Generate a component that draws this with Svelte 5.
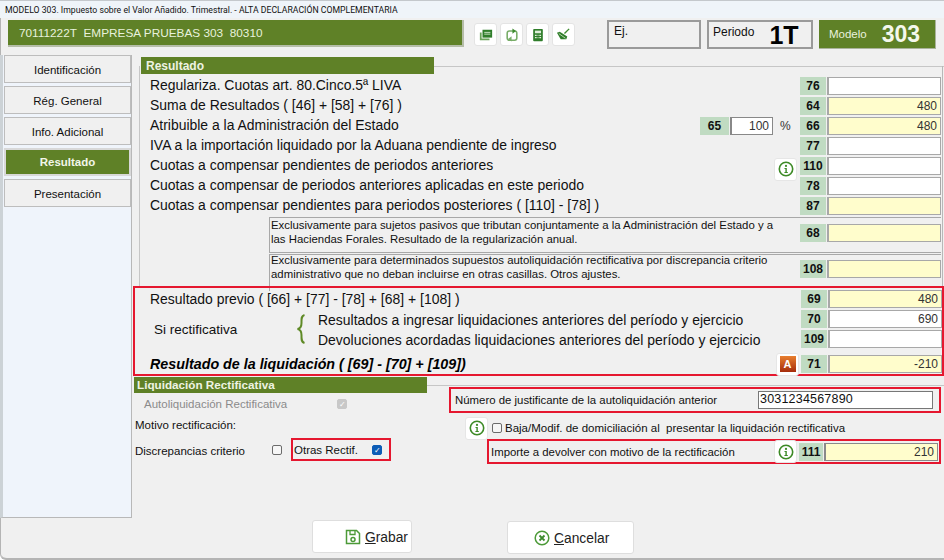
<script>
  const topRows = [
    { label: 'Regulariza. Cuotas art. 80.Cinco.5ª LIVA', code: '76', tone: 'white', value: '' },
    { label: 'Suma de Resultados ( [46] + [58] + [76] )', code: '64', tone: 'yellow', value: '480' },
    { label: 'Atribuible a la Administración del Estado', code: '66', tone: 'yellow', value: '480', pct: true },
    { label: 'IVA a la importación liquidado por la Aduana pendiente de ingreso', code: '77', tone: 'white', value: '' },
    { label: 'Cuotas a compensar pendientes de periodos anteriores', code: '110', tone: 'white', value: '', info: true },
    { label: 'Cuotas a compensar de periodos anteriores aplicadas en este periodo', code: '78', tone: 'white', value: '' },
    { label: 'Cuotas a compensar pendientes para periodos posteriores ( [110] - [78] )', code: '87', tone: 'yellow', value: '' }
  ];
  const notes = [
    { text: 'Exclusivamente para sujetos pasivos que tributan conjuntamente a la Administración del Estado y a las Haciendas Forales. Resultado de la regularización anual.', code: '68' },
    { text: 'Exclusivamente para determinados supuestos autoliquidación rectificativa por discrepancia criterio administrativo que no deban incluirse en otras casillas. Otros ajustes.', code: '108' }
  ];
  const tabs = ['Identificación', 'Rég. General', 'Info. Adicional', 'Resultado', 'Presentación'];
</script>

{#snippet infoIcon()}
  <svg viewBox="0 0 16 16" width="16" height="16" aria-hidden="true">
    <circle cx="8" cy="8" r="6.7" fill="none" stroke="#3d8a26" stroke-width="1.6" />
    <circle cx="8" cy="4.9" r="1.1" fill="#3d8a26" />
    <path d="M6.5 7h2.3v4h1v1.1H6.4V11h1V8.1h-.9z" fill="#3d8a26" />
  </svg>
{/snippet}

{#snippet cell(code, tone, value)}
  <span class="code">{code}</span>
  <span class="field {tone}">{value}</span>
{/snippet}

<div class="window">
  <div class="title">MODELO 303. Impuesto sobre el Valor Añadido. Trimestral. - ALTA DECLARACIÓN COMPLEMENTARIA</div>

  <header class="head">
    <div class="company">70111222T&nbsp; EMPRESA PRUEBAS 303&nbsp; 80310</div>
    <div class="tools">
      <span class="tool">
        <svg viewBox="0 0 16 16" width="14" height="14"><path d="M1 5h2v7h9v2H1z" fill="#6aa35a" /><rect x="4" y="2" width="11" height="9" fill="#2f7d2a" /><path d="M6 5h7M6 7h7" stroke="#d9ecd3" stroke-width="1" /></svg>
      </span>
      <span class="tool">
        <svg viewBox="0 0 16 16" width="14" height="14"><rect x="2.500" y="3.500" width="11" height="10.500" rx="2.500" fill="none" stroke="#78ad68" stroke-width="1.800" /><path d="M8.500 .5l4 3-4 3z" fill="#3d8a2e" /><path d="M7.500 15.500l-4-3 4-3z" fill="#78ad68" /></svg>
      </span>
      <span class="tool">
        <svg viewBox="0 0 16 16" width="14" height="14"><rect x="2.5" y="1" width="11" height="14" rx="1" fill="#2f7d2a" /><rect x="4.5" y="3" width="7" height="3" fill="#dfeeda" /><path d="M4.500 8.500h2M7.500 8.500h1M9.500 8.500h2M4.500 11h2M7.500 11h1M9.500 11h2" stroke="#dfeeda" stroke-width="1.300" /></svg>
      </span>
      <span class="tool">
        <svg viewBox="0 0 16 16" width="15" height="15"><path d="M9 7l5-5" stroke="#3d8a2e" stroke-width="1.500" /><path d="M1 6l3-1 8 5-1 3H5z" fill="#2f7d2a" /><path d="M3 7l7 5" stroke="#bcd9b3" stroke-width="1" /></svg>
      </span>
    </div>
    <div class="infobox ej"><span>Ej.</span></div>
    <div class="infobox periodo"><span>Periodo</span><b>1T</b></div>
    <div class="modelo"><span>Modelo</span><b>303</b></div>
  </header>

  <div class="body">
    <nav class="tabs">
      {#each tabs as tab}
        <div class="tab" class:active={tab === 'Resultado'}>{tab}</div>
      {/each}
    </nav>

    <main class="main">
      <div class="section-head first"><span>Resultado</span></div>

      <div class="upper">
        {#each topRows as r}
          <div class="row">
            <span class="label">{r.label}</span>
            {#if r.pct}
              <span class="code pct-code">65</span>
              <span class="field white pct-field">100</span>
              <span class="pct">%</span>
            {/if}
            {#if r.info}
              <span class="btn-icon row-info">{@render infoIcon()}</span>
            {/if}
            {@render cell(r.code, r.tone, r.value)}
          </div>
        {/each}

        {#each notes as n}
          <div class="note">
            <p>{n.text}</p>
            {@render cell(n.code, 'yellow', '')}
          </div>
        {/each}
      </div>

      <section class="redbox totals">
        <div class="row">
          <span class="label">Resultado previo ( [66] + [77] - [78] + [68] + [108] )</span>
          {@render cell('69', 'yellow', '480')}
        </div>
        <div class="rect">
          <span class="si">Si rectificativa</span>
          <svg class="brace" viewBox="0 0 10 30" width="10" height="30" aria-hidden="true">
            <path d="M8.500 1C5 2 5.500 5 5.500 9c0 4-1 5.500-4 6 3 .5 4 2 4 6 0 4-.5 7 3 8" fill="none" stroke="#5f8a26" stroke-width="2" />
          </svg>
          <div class="rect-rows">
            <div class="row">
              <span class="label">Resultados a ingresar liquidaciones anteriores del período y ejercicio</span>
              {@render cell('70', 'white', '690')}
            </div>
            <div class="row">
              <span class="label">Devoluciones acordadas liquidaciones anteriores del período y ejercicio</span>
              {@render cell('109', 'white', '')}
            </div>
          </div>
        </div>
        <div class="row final">
          <span class="label strong">Resultado de la liquidación ( [69] - [70] + [109])</span>
          <span class="btn-icon"><span class="a-icon">A</span></span>
          {@render cell('71', 'yellow', '-210')}
        </div>
      </section>

      <div class="section-head second"><span>Liquidación Rectificativa</span></div>

      <div class="lower">
        <div class="col-left">
          <label class="auto"><span>Autoliquidación Rectificativa</span><i class="check disabled">✓</i></label>
          <div class="motivo">Motivo rectificación:</div>
          <div class="criteria">
            <span class="disc">Discrepancias criterio</span>
            <i class="check"></i>
            <div class="redbox otras"><span>Otras Rectif.</span><i class="check on">✓</i></div>
          </div>
        </div>
        <div class="col-right">
          <div class="redbox just">
            <span>Número de justificante de la autoliquidación anterior</span>
            <span class="just-field">3031234567890</span>
          </div>
          <div class="baja">
            <span class="btn-icon">{@render infoIcon()}</span>
            <i class="check"></i>
            <span>Baja/Modif. de domiciliación al&nbsp; presentar la liquidación rectificativa</span>
          </div>
          <div class="redbox importe">
            <span class="imp-label">Importe a devolver con motivo de la rectificación</span>
            <span class="btn-icon">{@render infoIcon()}</span>
            <span class="code">111</span>
            <span class="field yellow">210</span>
          </div>
        </div>
      </div>

      <div class="actions">
        <button class="action grabar" type="button">
          <svg viewBox="0 0 16 16" width="16" height="16"><path d="M1.500 1.500h10l3 3v10h-13z" fill="none" stroke="#4c9a38" stroke-width="1.500" /><path d="M5 2v3.500h5V2" fill="none" stroke="#4c9a38" stroke-width="1.300" /><circle cx="8" cy="10.500" r="2" fill="none" stroke="#4c9a38" stroke-width="1.500" /></svg>
          <span class="action-text"><u>G</u>rabar</span>
        </button>
        <button class="action cancelar" type="button">
          <svg viewBox="0 0 16 16" width="16" height="16"><circle cx="8" cy="8" r="6.800" fill="none" stroke="#4c9a38" stroke-width="1.500" /><path d="M5.500 5.500l5 5M10.500 5.500l-5 5" stroke="#3d8a2e" stroke-width="1.800" /></svg>
          <span class="action-text"><u>C</u>ancelar</span>
        </button>
      </div>
    </main>
  </div>
</div>

<style>
  :global(body) { margin: 0; background: #fff; }
  .window {
    width: 944px; height: 560px; overflow: hidden; box-sizing: border-box;
    display: flex; flex-direction: column;
    font-family: "Liberation Sans", Arial, sans-serif; color: #111;
    background: #f0f0f0; border-bottom: 2px solid #b4b4b4; border-bottom-left-radius: 6px;
    box-shadow: inset 1px 0 #b4b4b4;
  }
  .title {
    height: 18px; flex: none; box-sizing: border-box; padding: 3px 0 0 5px;
    background: #eff4f9; border-top: 1px solid #c4c8cc;
    font-family: Roboto, "Liberation Sans", sans-serif;
    font-size: 8.700px; line-height: 13px; white-space: nowrap;
  }
  .head { height: 37px; flex: none; display: flex; align-items: flex-start; position: relative; z-index: 1; }
  .company {
    margin: 2px 0 0 8px; width: 456px; height: 27px; box-sizing: border-box;
    background: #5f8127; color: #e8f1dc; font-size: 11.800px; line-height: 26px; padding-left: 11px;
    border-right: 2px solid #b5bda8; border-bottom: 2px solid #b5bda8; white-space: nowrap;
  }
  .tools { display: flex; gap: 3px; margin: 5px 0 0 10px; }
  .tool {
    width: 23px; height: 23px; background: #fff; border-radius: 3px; border: 1px solid #e4e4e4;
    box-sizing: border-box; display: flex; align-items: center; justify-content: center;
  }
  .infobox {
    margin-top: 2px; height: 29px; box-sizing: border-box; border: 2px solid #9a9a9a;
    display: flex; font-size: 12px;
  }
  .ej { width: 94px; margin-left: 32px; padding: 2px 0 0 5px; }
  .periodo { width: 106px; margin-left: 6px; padding: 3px 0 0 4px; }
  .periodo b { font-size: 25px; line-height: 21px; margin-left: 15px; color: #000; }
  .modelo {
    margin: 2px 0 0 6px; width: 117px; height: 29px; box-sizing: border-box;
    background: #5f8127; color: #eaf2de; font-size: 11.500px; display: flex; align-items: center; padding-left: 10px;
    border-right: 1px solid #aab39c; border-bottom: 1px solid #aab39c;
  }
  .modelo b { font-size: 23px; line-height: 26px; margin-left: 15px; color: #f4f8ec; }

  .body { flex: 1; display: flex; min-height: 0; align-items: flex-start; }
  .tabs {
    width: 132px; height: 463px; flex: none; box-sizing: border-box; margin-right: 1px;
    background: #eff4fb; display: flex; flex-direction: column; gap: 3px;
    border-left: 3px solid #ccd2d6; padding-left: 1px;
    border-right: 1px solid #b8b8b8; border-bottom: 1px solid #b8b8b8;
  }
  .tab {
    width: 127px; height: 28px; flex: none; box-sizing: border-box; background: #f0f0f0; border: 1px solid #bdbdbd;
    font-size: 11.500px; line-height: 28px; text-align: center;
  }
  .tab.active {
    background: #5f8127; color: #f2f6e9; font-weight: 700; border: 2px solid #d8d8d8; line-height: 24px;
  }
  .main { flex: 1; min-width: 0; align-self: stretch; background: #f0f0f0; display: flex; flex-direction: column; }

  .section-head { display: flex; align-items: center; }
  .section-head span {
    display: block; background: #5f8127; color: #eef3e2; font-weight: 700; font-size: 12px;
    box-sizing: border-box; white-space: nowrap;
  }
  .section-head::after { content: ""; flex: 1; height: 1px; background: #c6c6c6; margin-top: 1px; }
  .first { margin: 2px 0 0 8px; }
  .first span { width: 293px; height: 17px; line-height: 18px; padding-left: 5px; }
  .second { margin-top: 1px; margin-left: 1px; }
  .second span { width: 293px; height: 16px; line-height: 16px; padding-left: 3px; font-size: 11.700px; }

  .upper {
    margin: -8px 1px 0 6px; padding-top: 10px; box-sizing: border-box;
    border-left: 1px solid #c6c6c6; border-right: 1px solid #b8b8b8;
    height: 222px;
  }
  .row { display: flex; align-items: center; height: 20px; }
  .upper > .row { padding-left: 10px; padding-right: 1px; }
  .label { flex: 1; font-size: 13.950px; line-height: 16px; white-space: nowrap; min-width: 0; }
  .upper > .row > .label { margin-top: -2px; }
  .code {
    width: 26px; height: 18px; flex: none; background: #c0dbc2; font-size: 12px; font-weight: 700;
    line-height: 18px; text-align: center; color: #111; margin-right: 1px;
  }
  .field {
    width: 114px; height: 18px; flex: none; box-sizing: border-box; font-size: 12px; line-height: 16px;
    text-align: right; padding-right: 3px; border: 1px solid #a8a8a8; border-width: 1px 1px 1px 2px; color: #333;
  }
  .white { background: #fff; }
  .yellow { background: #fffdcc; }
  .pct-code { width: 29px; }
  .pct-field { width: 43px; margin-right: 7px; border-color: #888; }
  .pct { font-size: 12px; width: 18px; color: #333; margin-right: 2px; }
  .btn-icon {
    width: 23px; height: 23px; flex: none; box-sizing: border-box; background: #fff; border-radius: 3px;
    border: 1px solid #e6e6e6; display: flex; align-items: center; justify-content: center;
  }
  .row-info { margin: 6px 3px 0 0; }

  .note {
    display: flex; align-items: flex-start; height: 36px; box-sizing: border-box; margin: 1px 1px 0 129px;
    padding-top: 6px; border: 1px solid #a8a8a8; border-width: 1px 0 1px 1px;
  }
  .note + .note { height: 37px; border-bottom: 0; padding-top: 5px; margin-top: 1px; }
  .note + .note p { margin-top: -7px; }
  .note p {
    flex: none; margin: -6px 0 0; padding-left: 1px; font-size: 11.400px; line-height: 14px; width: 510px;
  }
  .note .code { margin-left: 19px; }

  .redbox { border: 2px solid #e5172f; box-sizing: border-box; }
  .totals { margin: -2px 0 0 0; height: 90px; padding: 1px 0 0 15px; width: 811px; flex: none; }
  .rect { display: flex; align-items: center; }
  .si { width: 146px; padding-left: 4px; box-sizing: border-box; font-size: 13.500px; }
  .brace { flex: none; margin-right: 12px; margin-left: 0; }
  .rect-rows { flex: 1; }
  .rect-rows .label { margin-top: 2px; }
  .strong { font-weight: 700; font-style: italic; font-size: 14.300px; color: #000; }
  .final { margin-top: 5px; }
  .final .btn-icon { margin-right: 2px; }
  .a-icon {
    width: 16px; height: 16px; display: block; background: linear-gradient(#e87f2e, #a52c0c);
    color: #fff; font-size: 11px; font-weight: 700; text-align: center; line-height: 17px;
  }

  .lower { display: grid; grid-template-columns: 316px 1fr; height: 127px; margin-top: -6px; }
  .col-left { padding-top: 5px; min-width: 0; }
  .col-right { min-width: 0; font-size: 11.400px; }
  .check {
    display: inline-block; width: 10px; height: 10px; box-sizing: border-box; border: 1px solid #6b6b6b;
    border-radius: 2px; background: #f6f6f6; font-style: normal; font-size: 8px; line-height: 9px; text-align: center; color: #fff; flex: none;
  }
  .check.disabled { background: #c8c8c8; border-color: #c8c8c8; }
  .check.on { background: #0d5cb6; border-color: #0d5cb6; }
  .auto {
    display: flex; align-items: center; font-size: 11.500px; color: #8b8b8b; padding: 3px 0 0 11px; height: 17px;
  }
  .auto span { width: 193px; }
  .motivo { font-size: 11.500px; margin-top: 7px; height: 15px; padding-left: 2px; }
  .criteria { display: flex; align-items: center; margin-top: 4px; font-size: 11.500px; padding-left: 2px; }
  .disc { width: 137px; padding-top: 2px; }
  .otras { display: flex; align-items: center; width: 100px; height: 23px; margin-left: 9px; padding-left: 1px; }
  .otras span { width: 78px; padding-top: 1px; }
  .just {
    display: flex; align-items: center; width: 492px; height: 26px; padding-left: 4px;
  }
  .just > span:first-child { width: 303px; }
  .just-field {
    width: 175px; height: 18px; box-sizing: border-box; background: #fff; border: 1px solid #777;
    font-size: 12.500px; line-height: 15px; padding-left: 1px; letter-spacing: .2px;
  }
  .baja { display: flex; align-items: center; margin: 4px 0 0 16px; height: 22px; font-size: 11.500px; }
  .baja .check { margin: 0 3px 0 4px; }
  .importe {
    display: flex; align-items: center; margin: 0 0 0 38px; width: 454px; height: 25px; padding-left: 2px;
  }
  .imp-label { width: 283px; }
  .importe .btn-icon { margin-right: 2px; }
  .importe .code { width: 24px; margin-right: 1px; }
  .importe .field { width: 114px; border-color: #8a8a8a; }

  .actions { display: flex; height: 34px; margin-top: 6px; flex: none; }
  .action {
    height: 33px; box-sizing: border-box; background: #fff; border: 1px solid #dedede; border-radius: 3px;
    font-family: inherit; font-size: 13.800px; color: #222; display: flex; align-items: center; gap: 4px; padding: 0;
  }
  .action-text { padding-top: 2px; }
  .grabar { width: 100px; margin-left: 179px; padding-left: 32px; }
  .cancelar { width: 127px; margin-left: 95px; margin-top: 1px; padding-left: 26px; }
</style>
